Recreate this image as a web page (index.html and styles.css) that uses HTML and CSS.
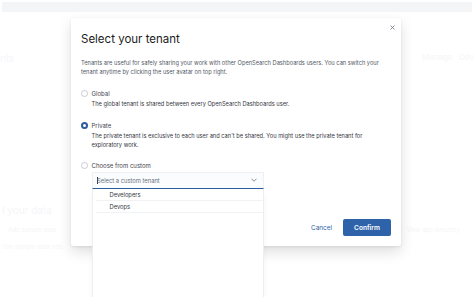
FILE: index.html
```html
<!DOCTYPE html>
<html lang="en">
<head>
    <meta charset="UTF-8">
    <meta name="viewport" content="width=device-width, initial-scale=1.0">
    <title>Select your tenant</title>
    <link rel="stylesheet" href="styles.css">
</head>
<body>
    <div class="topbar"></div>
    <div class="page">
        <div class="ghost-row">
            <span class="ghost ghost-lg">nts</span>
            <span class="ghost ghost-md">Manage &nbsp; Dev</span>
        </div>
        <div class="ghost-block">
            <div class="ghost ghost-lg">l your data</div>
            <div class="ghost-line">
                <span class="ghost ghost-sm">Add sample data</span>
                <span class="ghost ghost-sm">View app directory</span>
            </div>
            <div class="ghost ghost-sm">Use sample data sets</div>
        </div>
    </div>

    <div class="modal">
        <button class="close-btn" aria-label="Close">
            <svg width="5" height="5" viewBox="0 0 10 10"><path d="M1 1 L9 9 M9 1 L1 9" stroke="#6a717d" stroke-width="1.6"/></svg>
        </button>
        <h1 class="modal-title">Select your tenant</h1>
        <p class="modal-text">Tenants are useful for safely sharing your work with other OpenSearch Dashboards users. You can switch your tenant anytime by clicking the user avatar on top right.</p>

        <div class="option">
            <span class="radio"></span>
            <div class="option-body">
                <div class="option-label">Global</div>
                <div class="option-desc">The global tenant is shared between every OpenSearch Dashboards user.</div>
            </div>
        </div>

        <div class="option">
            <span class="radio checked"></span>
            <div class="option-body">
                <div class="option-label">Private</div>
                <div class="option-desc">The private tenant is exclusive to each user and can't be shared. You might use the private tenant for exploratory work.</div>
            </div>
        </div>

        <div class="option option-custom">
            <span class="radio"></span>
            <div class="option-body">
                <div class="option-label">Choose from custom</div>
                <div class="combo">
                    <div class="combo-input">
                        <span class="caret"></span>
                        <span class="placeholder">Select a custom tenant</span>
                        <svg class="chevron" width="6" height="4" viewBox="0 0 12 8"><path d="M1 1.5 L6 6.5 L11 1.5" fill="none" stroke="#69707d" stroke-width="1.6"/></svg>
                    </div>
                    <ul class="combo-list">
                        <li>Developers</li>
                        <li>Devops</li>
                    </ul>
                </div>
            </div>
        </div>

        <div class="modal-footer">
            <button class="btn-link">Cancel</button>
            <button class="btn-primary">Confirm</button>
        </div>
    </div>
</body>
</html>
```

FILE: styles.css
```css
body {
    font-family: Inter, "Noto Sans", sans-serif;
    background-color: #fff;
    color: #343741;
    margin: 0;
    padding: 0;
    width: 474px;
    height: 297px;
    overflow: hidden;
    position: relative;
}
.topbar {
    height: 10px;
    margin: 2px 2px 0;
    background-color: #f4f5f7;
}
.ghost {
    color: #f5f6f8;
}
.ghost-lg {
    font-size: 10px;
}
.ghost-md {
    font-size: 8px;
}
.ghost-sm {
    font-size: 6px;
}
.ghost-row {
    display: flex;
    justify-content: space-between;
    padding: 40px 0 0 0;
}
.ghost-block {
    padding: 140px 0 0 2px;
    display: flex;
    flex-direction: column;
    gap: 10px;
}
.ghost-line {
    display: flex;
    justify-content: space-between;
    padding: 0 14px 0 6px;
}
.modal {
    position: absolute;
    left: 71px;
    top: 18px;
    width: 330px;
    height: 228px;
    box-sizing: border-box;
    padding: 13px 10px 10px 10px;
    background: #fff;
    border-radius: 2px;
    box-shadow: 0 6px 14px rgba(0, 0, 0, 0.13), 0 1px 3px rgba(0, 0, 0, 0.08);
    display: flex;
    flex-direction: column;
}
.close-btn {
    position: absolute;
    top: 5px;
    right: 5px;
    width: 8px;
    height: 8px;
    padding: 0;
    border: none;
    background: none;
    display: flex;
    align-items: center;
    justify-content: center;
}
.modal-title {
    margin: 0;
    font-size: 11.5px;
    font-weight: 400;
    line-height: 16px;
    color: #1a1c21;
}
.modal-text {
    margin: 11px 0 0;
    font-size: 5.7px;
    line-height: 9px;
    color: #535966;
}
.option {
    display: flex;
    gap: 4px;
    margin-top: 13px;
}
.option + .option {
    margin-top: 13px;
}
.option-custom {
    margin-top: 12px !important;
}
.radio {
    width: 7px;
    height: 7px;
    margin: 1px 0 0 -0.5px;
    box-sizing: border-box;
    border: 1px solid #c8cbd0;
    border-radius: 50%;
    background: #fff;
    flex-shrink: 0;
}
.radio.checked {
    border: none;
    background: #2b5d9f;
    position: relative;
}
.radio.checked::after {
    content: "";
    position: absolute;
    left: 2px;
    top: 2px;
    width: 3px;
    height: 3px;
    border-radius: 50%;
    background: #fff;
}
.option-body {
    flex: 1;
}
.option-label {
    font-size: 6px;
    line-height: 9px;
    color: #3f434c;
}
.option-desc {
    margin-top: 1px;
    font-size: 5.7px;
    line-height: 9px;
    color: #343741;
}
.combo {
    position: relative;
    width: 172px;
    margin-top: 1.5px;
}
.combo-input {
    height: 17px;
    box-sizing: border-box;
    display: flex;
    align-items: center;
    padding: 0 6px 0 4px;
    background: #fbfcfd;
    border: 1px solid #eef0f3;
    border-bottom: 1.5px solid #2b5d9f;
}
.caret {
    width: 0.6px;
    height: 7px;
    background: #343741;
}
.placeholder {
    flex: 1;
    font-size: 5.8px;
    color: #69707d;
}
.combo-list {
    position: absolute;
    top: 17px;
    left: 0;
    width: 172px;
    height: 115px;
    margin: 0;
    padding: 0;
    list-style: none;
    background: #fff;
    box-sizing: border-box;
    border-left: 1px solid #eceef1;
    border-right: 1px solid #eceef1;
    box-shadow: 0 3px 6px rgba(0, 0, 0, 0.04);
    z-index: 10;
}
.combo-list li {
    height: 11px;
    line-height: 11px;
    padding-left: 14px;
    font-size: 5.8px;
    color: #343741;
    border-bottom: 1px solid #f1f2f4;
    margin-left: 3px;
}
.modal-footer {
    margin-top: auto;
    display: flex;
    justify-content: flex-end;
    align-items: center;
    gap: 11px;
}
.btn-link {
    background: none;
    border: none;
    padding: 0;
    font-family: inherit;
    font-size: 6.4px;
    color: #2b5d9f;
}
.btn-primary {
    width: 48px;
    height: 17px;
    padding: 0;
    border: none;
    border-radius: 2px;
    background-color: #2e63aa;
    color: #fff;
    font-family: inherit;
    font-size: 6.6px;
    font-weight: 600;
}
```
